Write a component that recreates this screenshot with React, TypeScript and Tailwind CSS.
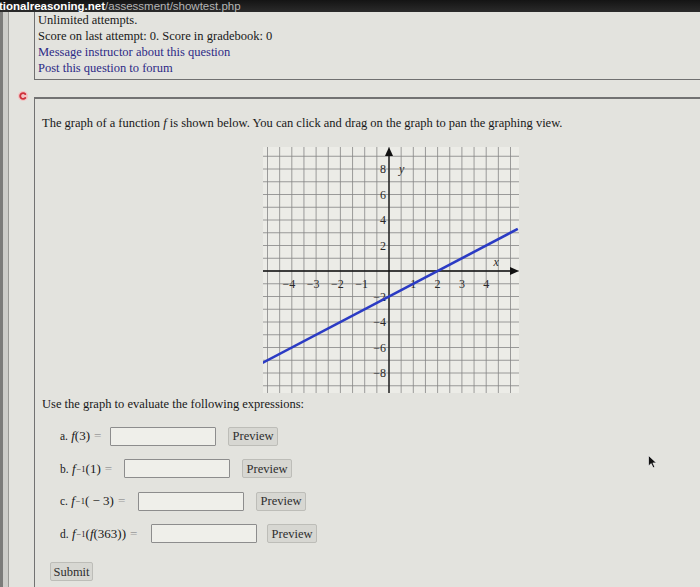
import React from "react";

// graph geometry (px inside the svg)
const GW = 256;
const GH = 246;
const OX = 126;
const OY = 124;
const UX = 24.3;
const UY = 12.75;

const px = (x: number) => OX + x * UX;
const py = (y: number) => OY - y * UY;

function Graph() {
  const vLines: number[] = [];
  for (let k = -10; k <= 10; k++) vLines.push(OX + (k * UX) / 2);
  const hLines: number[] = [];
  for (let j = -9; j <= 9; j++) hLines.push(OY - j * UY);

  const xTicks = [-4, -3, -2, -1, 1, 2, 3, 4];
  const yTicks = [8, 6, 4, 2, -2, -4, -6, -8];

  return (
    <svg width={GW} height={GH} viewBox={`0 0 ${GW} ${GH}`} className="block">
      <rect x={0} y={0} width={GW} height={GH} fill="#ecece7" />
      {vLines.map((x) => (
        <line key={"v" + x} x1={x} y1={0} x2={x} y2={GH} stroke="#858585" strokeWidth={0.8} />
      ))}
      {hLines.map((y) => (
        <line key={"h" + y} x1={0} y1={y} x2={GW} y2={y} stroke="#858585" strokeWidth={0.8} />
      ))}

      {/* axes */}
      <line x1={0} y1={OY} x2={GW - 6} y2={OY} stroke="#111" strokeWidth={1.3} />
      <polygon points={`${GW},${OY} ${GW - 9},${OY - 4} ${GW - 9},${OY + 4}`} fill="#111" />
      <line x1={OX} y1={GH} x2={OX} y2={6} stroke="#111" strokeWidth={1.3} />
      <polygon points={`${OX},0 ${OX - 4},9 ${OX + 4},9`} fill="#111" />

      {/* tick labels */}
      <g fontFamily="'Liberation Serif', serif" fontSize={12} fill="#2a2a2a">
        {xTicks.map((n) => (
          <text key={"x" + n} x={px(n) - (n < 0 ? 3 : 0)} y={OY + 17} textAnchor="middle">
            {n < 0 ? "\u2212" + Math.abs(n) : n}
          </text>
        ))}
        {yTicks.map((n) => (
          <text key={"y" + n} x={OX - 3} y={py(n) + 4} textAnchor="end">
            {n < 0 ? "\u2212" + Math.abs(n) : n}
          </text>
        ))}
        <text x={OX + 10} y={py(8) + 4} fontStyle="italic">y</text>
        <text x={px(4.3)} y={OY - 5} fontStyle="italic">x</text>
      </g>

      {/* f(x) = x - 2 */}
      <line x1={px(-5.3)} y1={py(-7.3)} x2={px(5.3)} y2={py(3.3)} stroke="#2b3bc4" strokeWidth={2.6} />
    </svg>
  );
}

function Inv() {
  return (
    <>
      <i>f</i>
      <sup className="relative -top-[1px] ml-[1px] text-[8.5px]">{"\u2212"}1</sup>
    </>
  );
}

function Eq() {
  return <span className="ml-[4px] text-[#9a9a9a]">=</span>;
}

function PreviewButton() {
  return (
    <button className="h-[19px] w-[50px] rounded-[2px] border border-[#bdbdb8] bg-[#d7d7d2] text-[12.5px] leading-none text-[#2e2e2e]">
      Preview
    </button>
  );
}

function AnswerBox() {
  return <div className="h-[19px] w-[106px] rounded-[1px] border border-[#8d8d8d] bg-[#efefea]" />;
}

export default function App() {
  return (
    <div className="relative flex h-[587px] w-[700px] flex-col overflow-hidden bg-[#e3e3de] font-['Liberation_Serif',serif] text-[#181818]">
      {/* browser address strip */}
      <div className="relative z-10 h-[12px] shrink-0 overflow-hidden whitespace-nowrap bg-gradient-to-b from-[#141414] to-[#2b2b2b] font-['Liberation_Sans',sans-serif] text-[11.5px] leading-[12px]">
        <div className="-ml-[1px]">
          <span className="font-bold text-white">tionalreasoning.net</span>
          <span className="text-[#b5b5b5]">/assessment/showtest.php</span>
        </div>
      </div>

      <div className="flex min-h-0 flex-1">
        <div className="w-[3px] bg-[#7c7c7a]" />
        <div className="w-[6px] border-r border-[#9a9a96] bg-[#cdcdc9]" />

        <div className="flex flex-1 flex-col">
          {/* question info box */}
          <div className="ml-[25px] border-b border-l border-[#707070] pb-[3px] pl-[3px] text-[12.5px] leading-[16px]">
            <div>Unlimited attempts.</div>
            <div>Score on last attempt: 0. Score in gradebook: 0</div>
            <div className="text-[#2d2a86]">Message instructor about this question</div>
            <div className="text-[#2d2a86]">Post this question to forum</div>
          </div>

          <div className="mt-[17px] flex">
            <div className="w-[25px] pl-[9px]">
              <svg width="10" height="10" viewBox="0 0 10 10" className="-mt-[6px] block">
                <circle cx="5" cy="5" r="5" fill="#f2c3c3" />
                <path d="M7.3 3.1 A2.9 2.9 0 1 0 7.3 6.9" fill="none" stroke="#cf2f3a" strokeWidth="1.9" strokeLinecap="round" />
              </svg>
            </div>

            {/* question box */}
            <div className="flex-1 border-b border-l border-t-2 border-[#727272] pb-[5px] pl-[7px] pt-[16px]">
              <div className="text-[12.5px] leading-[16px]">
                The graph of a function <i>f</i> is shown below. You can click and drag on the graph to pan the graphing view.
              </div>

              <div className="ml-[221px] mt-[16px]">
                <Graph />
              </div>

              <div className="mt-[3px] text-[12.5px] leading-[16px]">
                Use the graph to evaluate the following expressions:
              </div>

              <div className="mt-[14px] flex flex-col gap-[12.5px] pl-[18px] text-[13px]">
                <div className="flex h-[20px] items-center">
                  <div className="w-[50px] whitespace-nowrap">
                    <span className="text-[11.5px]">a.</span> <i>f</i>(3)<Eq />
                  </div>
                  <AnswerBox />
                  <div className="ml-[12px]"><PreviewButton /></div>
                </div>
                <div className="flex h-[20px] items-center">
                  <div className="w-[64px] whitespace-nowrap">
                    <span className="text-[11.5px]">b.</span> <Inv />(1)<Eq />
                  </div>
                  <AnswerBox />
                  <div className="ml-[12px]"><PreviewButton /></div>
                </div>
                <div className="flex h-[20px] items-center">
                  <div className="w-[78px] whitespace-nowrap">
                    <span className="text-[11.5px]">c.</span> <Inv />( {"\u2212"} 3)<Eq />
                  </div>
                  <AnswerBox />
                  <div className="ml-[12px]"><PreviewButton /></div>
                </div>
                <div className="flex h-[20px] items-center">
                  <div className="w-[91px] whitespace-nowrap">
                    <span className="text-[11.5px]">d.</span> <Inv />(<i>f</i>(363))<Eq />
                  </div>
                  <AnswerBox />
                  <div className="ml-[10px]"><PreviewButton /></div>
                </div>
              </div>

              <div className="mt-[15px] pl-[8px]">
                <button className="h-[19px] w-[43px] rounded-[2px] border border-[#bdbdb8] bg-[#d7d7d2] text-[12.5px] leading-none text-[#2e2e2e]">
                  Submit
                </button>
              </div>
            </div>
          </div>
        </div>
      </div>

      {/* mouse pointer */}
      <svg width="10" height="14" viewBox="0 0 10 14" className="absolute left-[648px] top-[455px]">
        <path d="M0.5 0.5 L0.5 11 L3.2 8.6 L5.1 12.8 L6.8 12 L4.9 7.9 L8.4 7.9 Z" fill="#111" stroke="#fff" strokeWidth="0.6" />
      </svg>
    </div>
  );
}
